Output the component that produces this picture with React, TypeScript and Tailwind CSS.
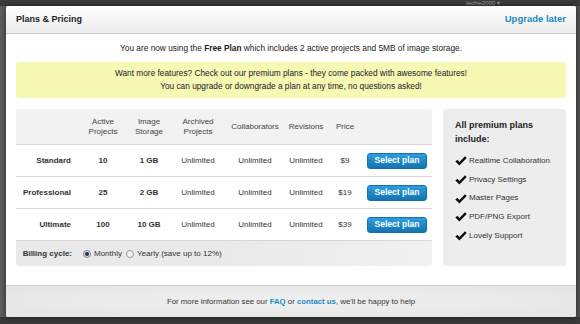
import React from "react";

const font = { fontFamily: '"Liberation Sans", Arial, sans-serif' };

function Check() {
  return (
    <svg width="12" height="10" viewBox="0 0 12 10" className="shrink-0">
      <path d="M0.3 5.6 L2.4 3.7 L4.4 5.9 L10 0.3 L11.7 2 L4.4 9.6 Z" fill="#111" />
    </svg>
  );
}

const cols = "grid grid-cols-[64px_46px_46px_52px_62px_40px_38px_68px] items-center";

const rows = [
  { name: "Standard", active: "10", storage: "1 GB", price: "$9" },
  { name: "Professional", active: "25", storage: "2 GB", price: "$19" },
  { name: "Ultimate", active: "100", storage: "10 GB", price: "$39" },
];

export default function App() {
  return (
    <div className="relative w-[580px] h-[324px] overflow-hidden bg-[#4a4a4a]" style={font}>
      {/* background app (dimmed) */}
      <div className="flex flex-col h-full">
        <div className="h-[6px] bg-[#3c3c3c] flex items-center justify-end pr-[80px]">
          <span className="text-[6px] leading-[6px] text-[#aaa]">techie2000 ▾</span>
        </div>
        <div className="flex-1 flex justify-between">
          <div className="w-[6px] bg-[#5e5e5e]" />
          <div className="w-[4px] bg-[#555]" />
        </div>
        <div className="h-[7px] bg-[#3a3a3a]" />
      </div>

      {/* modal */}
      <div className="absolute left-[6px] top-[6px] w-[570px] h-[311px] bg-white flex flex-col shadow-[0_0_6px_rgba(0,0,0,0.6)] rounded-[2px] overflow-hidden">
        <div className="h-[28px] shrink-0 flex items-center justify-between px-[10px] bg-gradient-to-b from-white to-[#ececec] border-b border-[#c9c9c9]">
          <span className="text-[9px] font-bold text-[#222]">Plans &amp; Pricing</span>
          <span className="text-[9.5px] font-bold text-[#1a8bc2]">Upgrade later</span>
        </div>

        <div className="flex-1 px-[10px] pt-[8px]">
          <p className="text-[8.3px] leading-[12px] text-[#222] text-center">
            You are now using the <b>Free Plan</b> which includes 2 active projects and 5MB of image storage.
          </p>
          <div className="mt-[8px] h-[36px] rounded-[3px] bg-[#f6f8b4] flex flex-col items-center justify-center text-[8.3px] leading-[13px] text-[#222]">
            <span>Want more features? Check out our premium plans - they come packed with awesome features!</span>
            <span>You can upgrade or downgrade a plan at any time, no questions asked!</span>
          </div>

          <div className="mt-[11px] flex gap-[11px] h-[157px]">
            <div className="w-[416px] flex flex-col rounded-[3px] overflow-hidden text-[8px] text-[#333]">
              <div className={`${cols} h-[36px] bg-[#f2f2f2] border-b border-[#d6d6d6] leading-[10px] text-center text-[#444]`}>
                <span />
                <span>Active<br />Projects</span>
                <span>Image<br />Storage</span>
                <span>Archived<br />Projects</span>
                <span>Collaborators</span>
                <span>Revisions</span>
                <span>Price</span>
                <span />
              </div>
              {rows.map((r) => (
                <div key={r.name} className={`${cols} h-[32px] border-b border-[#d6d6d6] text-center bg-white`}>
                  <span className="text-right pr-[9px] font-bold">{r.name}</span>
                  <span className="font-bold">{r.active}</span>
                  <span className="font-bold">{r.storage}</span>
                  <span>Unlimited</span>
                  <span>Unlimited</span>
                  <span>Unlimited</span>
                  <span>{r.price}</span>
                  <span className="flex justify-center pr-[2px]">
                    <span className="w-[60px] h-[16px] rounded-[3px] bg-gradient-to-b from-[#2d9fdb] to-[#1574b3] border border-[#1670aa] text-white font-bold text-[8.5px] flex items-center justify-center">
                      Select plan
                    </span>
                  </span>
                </div>
              ))}
              <div className="flex-1 flex items-center bg-gradient-to-r from-[#e9e9e9] via-[#e9e9e9] to-[#f1f1f1]">
                <span className="w-[64px] text-right pr-[8px] font-bold">Billing cycle:</span>
                <span className="ml-[3px] w-[8px] h-[8px] rounded-full border border-[#888] bg-[#dde] flex items-center justify-center">
                  <span className="w-[4px] h-[4px] rounded-full bg-[#1d3550]" />
                </span>
                <span className="ml-[3px]">Monthly</span>
                <span className="ml-[4px] w-[8px] h-[8px] rounded-full border border-[#999] bg-[#f4f4f4]" />
                <span className="ml-[3px]">Yearly (save up to 12%)</span>
              </div>
            </div>

            <div className="w-[123px] rounded-[3px] bg-[#ededed] pl-[12px] pt-[9px] text-[#222]">
              <p className="text-[9px] leading-[14px] font-bold">All premium plans<br />include:</p>
              <ul className="mt-[9px] flex flex-col gap-[6px] text-[8px] leading-[12.7px] text-[#333]">
                {["Realtime Collaboration", "Privacy Settings", "Master Pages", "PDF/PNG Export", "Lovely Support"].map((t) => (
                  <li key={t} className="flex items-center gap-[2px]">
                    <Check />
                    <span>{t}</span>
                  </li>
                ))}
              </ul>
            </div>
          </div>
        </div>

        <div className="h-[32px] shrink-0 border-t border-[#cfcfcf] bg-[radial-gradient(ellipse_at_center,#f0f0f0,#e4e4e4)] flex items-center justify-center text-[7.8px] text-[#333]">
          <span>
            For more information see our <b className="text-[#1a8bc2]">FAQ</b> or <b className="text-[#1a8bc2]">contact us</b>, we'll be happy to help
          </span>
        </div>
      </div>
    </div>
  );
}
